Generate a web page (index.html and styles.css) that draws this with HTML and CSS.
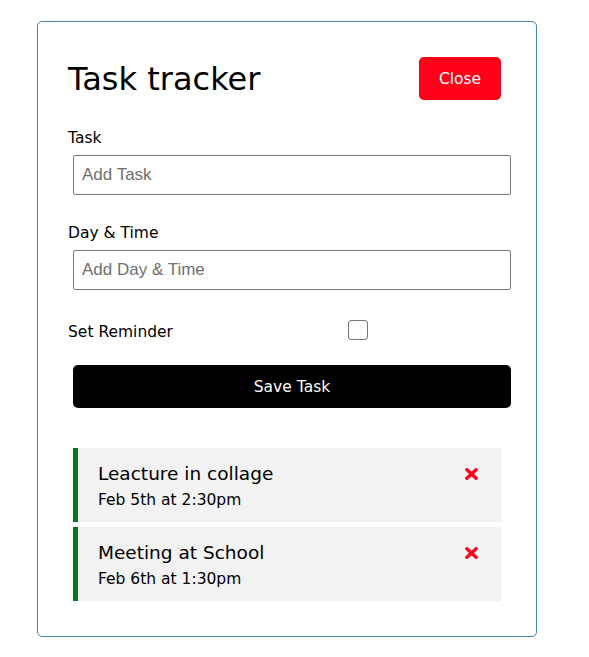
FILE: index.html
```html
<!DOCTYPE html>
<html>
<head>
<meta charset="utf-8">
<title>Task tracker</title>
<link rel="stylesheet" href="styles.css">
</head>
<body>
<div class="container">
  <header class="header">
    <h1>Task tracker</h1>
    <button class="btn btn-close">Close</button>
  </header>
  <form class="add-form">
    <div class="form-control">
      <label>Task</label>
      <input type="text" placeholder="Add Task">
    </div>
    <div class="form-control">
      <label>Day &amp; Time</label>
      <input type="text" placeholder="Add Day &amp; Time">
    </div>
    <div class="form-control form-control-check">
      <label>Set Reminder</label>
      <span class="check-wrap"><span class="checkbox"></span></span>
    </div>
    <button type="button" class="btn btn-block">Save Task</button>
  </form>
  <div class="task reminder">
    <h3>Leacture in collage
      <svg class="times" viewBox="0 80 352 352" width="13" height="12" preserveAspectRatio="none"><path fill="currentColor" d="M242.72 256l100.07-100.07c12.28-12.28 12.28-32.19 0-44.48l-22.24-22.24c-12.28-12.28-32.19-12.28-44.48 0L176 189.28 75.93 89.21c-12.28-12.28-32.19-12.28-44.48 0L9.21 111.45c-12.28 12.28-12.28 32.19 0 44.48L109.28 256 9.21 356.07c-12.28 12.28-12.28 32.19 0 44.48l22.24 22.24c12.28 12.28 32.2 12.28 44.48 0L176 322.72l100.07 100.07c12.28 12.28 32.2 12.28 44.48 0l22.24-22.24c12.28-12.28 12.28-32.19 0-44.48L242.72 256z"/></svg>
    </h3>
    <p>Feb 5th at 2:30pm</p>
  </div>
  <div class="task reminder">
    <h3>Meeting at School
      <svg class="times" viewBox="0 80 352 352" width="13" height="12" preserveAspectRatio="none"><path fill="currentColor" d="M242.72 256l100.07-100.07c12.28-12.28 12.28-32.19 0-44.48l-22.24-22.24c-12.28-12.28-32.19-12.28-44.48 0L176 189.28 75.93 89.21c-12.28-12.28-32.19-12.28-44.48 0L9.21 111.45c-12.28 12.28-12.28 32.19 0 44.48L109.28 256 9.21 356.07c-12.28 12.28-12.28 32.19 0 44.48l22.24 22.24c12.28 12.28 32.2 12.28 44.48 0L176 322.72l100.07 100.07c12.28 12.28 32.2 12.28 44.48 0l22.24-22.24c12.28-12.28 12.28-32.19 0-44.48L242.72 256z"/></svg>
    </h3>
    <p>Feb 6th at 1:30pm</p>
  </div>
</div>
</body>
</html>
```
FILE: styles.css
```css
* {
  box-sizing: border-box;
  margin: 0;
  padding: 0;
}
body {
  font-family: "DejaVu Sans", sans-serif;
  background: #fff;
  color: #000;
  margin: 0;
  padding-top: 21px;
}
.container {
  width: 500px;
  margin: 0 0 0 37px;
  min-height: 300px;
  border: 1px solid steelblue;
  border-radius: 5px;
  padding: 30px;
  overflow: hidden;
}
.header {
  display: flex;
  justify-content: space-between;
  align-items: center;
  margin-bottom: 21px;
}
.header h1 {
  font-size: 32px;
  font-weight: 400;
  line-height: 47px;
  padding-top: 2px;
}
.btn {
  display: inline-block;
  background: #000;
  color: #fff;
  border: none;
  padding: 0 20px;
  height: 43px;
  margin: 5px;
  border-radius: 5px;
  font-size: 15px;
  font-family: inherit;
  cursor: pointer;
}
.btn-close {
  background: #ff0019;
  width: 82px;
  padding: 0;
  font-size: 15.5px;
}
.btn-block {
  display: block;
  width: 438px;
  margin: 5px 0 0 5px;
  font-size: 15.5px;
}
.add-form {
  margin-bottom: 40px;
}
.form-control {
  margin: 0;
}
.form-control + .form-control {
  margin-top: 26px;
}
.form-control label {
  display: block;
  font-size: 15.5px;
  line-height: 24px;
}
.form-control input {
  display: block;
  width: 438px;
  height: 40px;
  margin: 5px;
  padding: 3px 8px;
  font-size: 17px;
  font-family: "Liberation Sans", Arial, sans-serif;
  border: 1px solid #767676;
  border-radius: 2px;
  color: #000;
}
.form-control input::placeholder {
  color: #6f6f6f;
}
.form-control-check {
  display: flex;
  align-items: center;
  height: 30px;
  margin-bottom: 20px;
}
.form-control + .form-control-check {
  margin-top: 25px;
}
.form-control-check label {
  flex: 1;
  padding-top: 4px;
}
.check-wrap {
  flex: 2;
  display: flex;
  justify-content: center;
  margin: 5px;
}
.checkbox {
  width: 20px;
  height: 20px;
  border: 1px solid #767676;
  border-radius: 3px;
  background: #fff;
}
.task {
  background: #f2f2f2;
  margin: 5px;
  padding: 11px 20px 0;
  height: 74px;
}
.task.reminder {
  border-left: 5px solid #08761f;
}
.task h3 {
  display: flex;
  align-items: center;
  justify-content: space-between;
  font-size: 18.5px;
  font-weight: 400;
  line-height: 29px;
}
.task p {
  font-size: 15.5px;
  line-height: 24px;
}
.times {
  color: #ff0019;
  margin-right: 3px;
  flex: none;
}
```
